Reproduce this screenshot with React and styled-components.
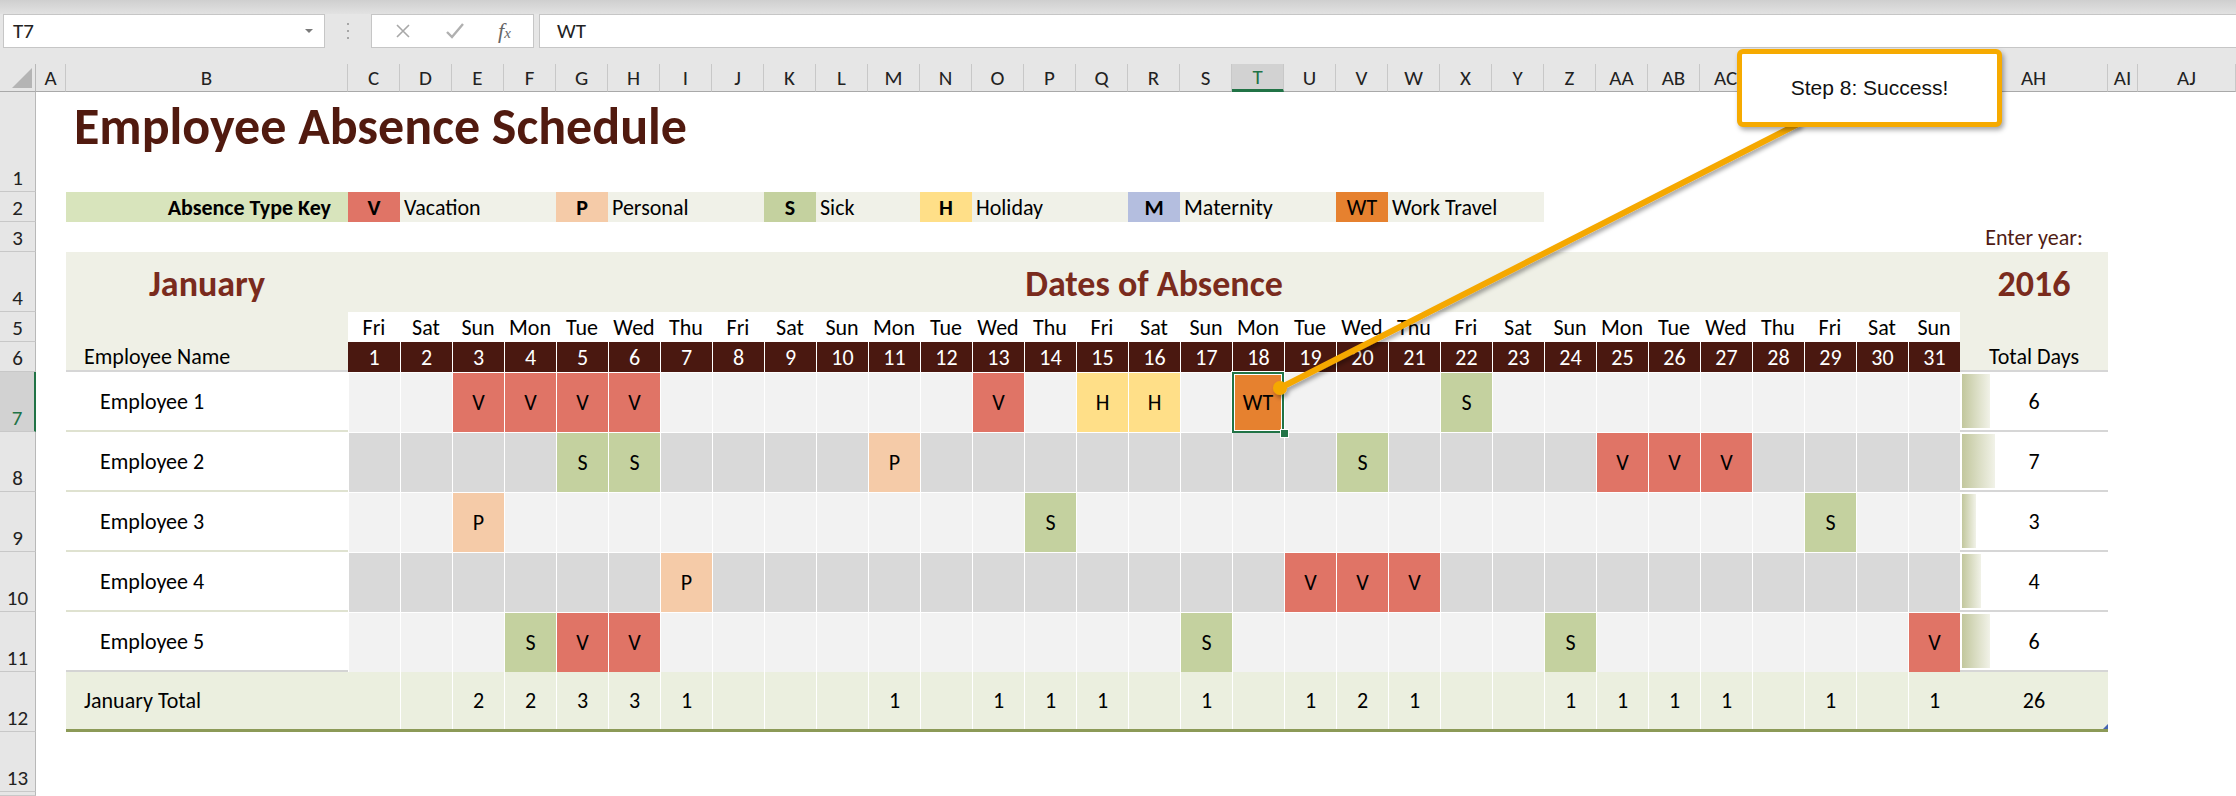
import React from 'react'
import styled, { createGlobalStyle, css } from 'styled-components'

const FONT = `Carlito, Calibri, Lato, sans-serif`

const GlobalStyle = createGlobalStyle`
  html, body {
    margin: 0;
    padding: 0;
    background: #fff;
  }
  body {
    font-family: ${FONT};
    overflow: hidden;
  }
`

const LETTERS = [
  'A', 'B', 'C', 'D', 'E', 'F', 'G', 'H', 'I', 'J', 'K', 'L', 'M', 'N', 'O', 'P', 'Q', 'R',
  'S', 'T', 'U', 'V', 'W', 'X', 'Y', 'Z', 'AA', 'AB', 'AC', 'AD', 'AE', 'AF', 'AG', 'AH', 'AI', 'AJ',
]
const WEEKDAYS = ['Fri', 'Sat', 'Sun', 'Mon', 'Tue', 'Wed', 'Thu']
const DAYS = Array.from({ length: 31 }, (_, i) => i + 1)

const CODES = {
  V: '#e07466',
  P: '#f5cba8',
  S: '#c4d19f',
  H: '#ffdf88',
  M: '#b4bedf',
  WT: '#e6812f',
}

const LEGEND = [
  { code: 'V', label: 'Vacation', col: 4, span: 3 },
  { code: 'P', label: 'Personal', col: 8, span: 3 },
  { code: 'S', label: 'Sick', col: 12, span: 2 },
  { code: 'H', label: 'Holiday', col: 15, span: 3 },
  { code: 'M', label: 'Maternity', col: 19, span: 3 },
  { code: 'WT', label: 'Work Travel', col: 23, span: 3 },
]

const employees = [
  { name: 'Employee 1', total: 6, days: { 3: 'V', 4: 'V', 5: 'V', 6: 'V', 13: 'V', 15: 'H', 16: 'H', 18: 'WT', 22: 'S' } },
  { name: 'Employee 2', total: 7, days: { 5: 'S', 6: 'S', 11: 'P', 20: 'S', 25: 'V', 26: 'V', 27: 'V' } },
  { name: 'Employee 3', total: 3, days: { 3: 'P', 14: 'S', 29: 'S' } },
  { name: 'Employee 4', total: 4, days: { 7: 'P', 19: 'V', 20: 'V', 21: 'V' } },
  { name: 'Employee 5', total: 6, days: { 4: 'S', 5: 'V', 6: 'V', 17: 'S', 24: 'S', 31: 'V' } },
]

const dayTotals = { 3: 2, 4: 2, 5: 3, 6: 3, 7: 1, 11: 1, 13: 1, 14: 1, 15: 1, 17: 1, 19: 1, 20: 2, 21: 1, 24: 1, 25: 1, 26: 1, 27: 1, 29: 1, 31: 1 }

export default function App() {
  return (
    <Page>
      <GlobalStyle />
      <TopStrip />
      <FormulaBar>
        <NameBox>
          <span>T7</span>
          <svg width="10" height="6" viewBox="0 0 10 6">
            <path d="M1 1 L9 1 L5 5 Z" fill="#7a7a7a" />
          </svg>
        </NameBox>
        <Grip>
          <svg width="4" height="20" viewBox="0 0 4 20">
            <rect x="1" y="2" width="2" height="2" fill="#a6a6a6" />
            <rect x="1" y="9" width="2" height="2" fill="#a6a6a6" />
            <rect x="1" y="16" width="2" height="2" fill="#a6a6a6" />
          </svg>
        </Grip>
        <FxBox>
          <svg width="18" height="18" viewBox="0 0 18 18">
            <path d="M3 3 L15 15 M15 3 L3 15" stroke="#a8a8a8" strokeWidth="1.6" fill="none" />
          </svg>
          <svg width="20" height="18" viewBox="0 0 20 18">
            <path d="M2 10 L7 15 L18 2" stroke="#b0b0b0" strokeWidth="2.4" fill="none" />
          </svg>
          <FxText>
            f<sub>x</sub>
          </FxText>
        </FxBox>
        <FormulaInput>WT</FormulaInput>
      </FormulaBar>

      <Sheet>
        <Corner $c={1} $r={1} />
        {LETTERS.map((l, i) => (
          <ColHeader key={l} $c={i + 2} $r={1} $active={l === 'T'}>
            {l}
          </ColHeader>
        ))}
        {Array.from({ length: 14 }, (_, i) => (
          <RowHeader key={i} $c={1} $r={i + 2} $active={i + 1 === 7}>
            {i < 13 ? i + 1 : ''}
          </RowHeader>
        ))}

        <Title $c={3} $r={2} $w={20}>
          Employee Absence Schedule
        </Title>

        <KeyLabel $c={3} $r={3}>
          Absence Type Key
        </KeyLabel>
        {LEGEND.map((item) => (
          <React.Fragment key={item.code}>
            <KeyCode $c={item.col} $r={3} $bg={CODES[item.code]} $plain={item.code === 'WT'}>
              {item.code}
            </KeyCode>
            <KeyText $c={item.col + 1} $r={3} $w={item.span}>
              {item.label}
            </KeyText>
          </React.Fragment>
        ))}

        <YearPrompt $c={35} $r={4}>
          Enter year:
        </YearPrompt>

        <HeaderBand $c={3} $r={5} $w={33} $h={3} />
        <BigHeading $c={3} $r={5}>
          January
        </BigHeading>
        <BigHeading $c={4} $r={5} $w={31}>
          Dates of Absence
        </BigHeading>
        <BigHeading $c={35} $r={5}>
          2016
        </BigHeading>

        {DAYS.map((d) => (
          <Weekday key={d} $c={3 + d} $r={6}>
            {WEEKDAYS[(d - 1) % 7]}
          </Weekday>
        ))}

        <NameHeader $c={3} $r={7}>
          Employee Name
        </NameHeader>
        {DAYS.map((d) => (
          <DateNum key={d} $c={3 + d} $r={7} $first={d === 1}>
            {d}
          </DateNum>
        ))}
        <TotalHeader $c={35} $r={7}>
          Total Days
        </TotalHeader>

        {employees.map((emp, i) => {
          const r = 8 + i
          return (
            <React.Fragment key={emp.name}>
              <NameCell $c={3} $r={r} $last={i === employees.length - 1}>
                {emp.name}
              </NameCell>
              {DAYS.map((d) => {
                const code = emp.days[d]
                const bg = code ? CODES[code] : i % 2 ? '#d9d9d9' : '#f2f2f2'
                return (
                  <DayCell key={d} $c={3 + d} $r={r} $bg={bg} $selected={i === 0 && d === 18}>
                    {code}
                  </DayCell>
                )
              })}
              <TotalCell $c={35} $r={r}>
                <DataBar style={{ width: Math.round(emp.total * 4.7) }} />
                <TotalValue>{emp.total}</TotalValue>
              </TotalCell>
            </React.Fragment>
          )
        })}

        <TotalBand $c={3} $r={13} $w={33} />
        <TotalLabel $c={3} $r={13}>
          January Total
        </TotalLabel>
        {DAYS.map((d) => (
          <TotalCount key={d} $c={3 + d} $r={13} $first={d === 1}>
            {dayTotals[d] || ''}
          </TotalCount>
        ))}
        <GrandTotal $c={35} $r={13}>
          26
        </GrandTotal>
      </Sheet>

      <Leader width="2236" height="796" viewBox="0 0 2236 796">
        <defs>
          <filter id="shadow" x="-10%" y="-10%" width="120%" height="120%">
            <feDropShadow dx="2" dy="3" stdDeviation="2" floodColor="#000" floodOpacity="0.35" />
          </filter>
        </defs>
        <g filter="url(#shadow)">
          <line x1="1798" y1="124" x2="1280" y2="388" stroke="#f5a800" strokeWidth="6" strokeLinecap="round" />
          <circle cx="1280" cy="388" r="7" fill="#f5a800" />
        </g>
      </Leader>
      <Callout>Step 8: Success!</Callout>
    </Page>
  )
}

const at = css`
  grid-column: ${(p) => p.$c} / span ${(p) => p.$w || 1};
  grid-row: ${(p) => p.$r} / span ${(p) => p.$h || 1};
`

const Page = styled.div`
  position: relative;
  width: 2236px;
  height: 796px;
  overflow: hidden;
  background: #fff;
  font-family: ${FONT};
`

const TopStrip = styled.div`
  height: 14px;
  background: linear-gradient(#cfcfcf, #e2e2e2);
`

const FormulaBar = styled.div`
  display: flex;
  height: 50px;
  padding: 0 0 16px 3px;
  box-sizing: border-box;
  background: #e6e6e6;
`

const Box = styled.div`
  display: flex;
  align-items: center;
  box-sizing: border-box;
  background: #fff;
  border: 1px solid #c6c6c6;
`

const NameBox = styled(Box)`
  width: 322px;
  justify-content: space-between;
  padding: 0 10px 0 9px;
  font-size: 21px;
  color: #222;
`

const Grip = styled.div`
  width: 46px;
  display: flex;
  align-items: center;
  justify-content: center;
`

const FxBox = styled(Box)`
  width: 163px;
  gap: 33px;
  padding-left: 22px;
`

const FxText = styled.span`
  font-family: 'Liberation Serif', serif;
  font-style: italic;
  font-size: 22px;
  color: #666;
  sub {
    font-size: 15px;
    vertical-align: 0;
  }
`

const FormulaInput = styled(Box)`
  flex: 1;
  margin-left: 5px;
  padding-left: 17px;
  font-size: 21px;
  color: #222;
  border-right: none;
`

const Sheet = styled.div`
  display: grid;
  grid-template-columns: 36px 30px 282px repeat(31, 52px) 148px 30px 1fr;
  grid-template-rows: 28px 100px 30px 30px 60px 30px 30px repeat(5, 60px) 60px 60px 1fr;
  height: 732px;
  font-size: 22px;
  color: #000;
`

const Corner = styled.div`
  ${at};
  position: relative;
  background: #e6e6e6;
  border-right: 1px solid #b8b8b8;
  border-bottom: 1px solid #a9a9a9;

  &::after {
    content: '';
    position: absolute;
    right: 3px;
    bottom: 3px;
    width: 20px;
    height: 20px;
    background: #b4b4b4;
    clip-path: polygon(100% 0, 100% 100%, 0 100%);
  }
`

const ColHeader = styled.div`
  ${at};
  display: flex;
  align-items: center;
  justify-content: center;
  box-sizing: border-box;
  font-size: 21px;
  background: ${(p) => (p.$active ? '#d2d2d2' : '#e6e6e6')};
  color: ${(p) => (p.$active ? '#217346' : '#222')};
  border-right: 1px solid #c8c8c8;
  border-bottom: ${(p) => (p.$active ? '3px solid #217346' : '1px solid #a9a9a9')};
`

const RowHeader = styled.div`
  ${at};
  display: flex;
  align-items: flex-end;
  justify-content: center;
  box-sizing: border-box;
  font-size: 21px;
  line-height: 1.2;
  background: ${(p) => (p.$active ? '#d2d2d2' : '#e6e6e6')};
  color: ${(p) => (p.$active ? '#217346' : '#222')};
  border-bottom: 1px solid #c8c8c8;
  border-right: ${(p) => (p.$active ? '2px solid #217346' : '1px solid #b8b8b8')};
`

const Title = styled.div`
  ${at};
  align-self: end;
  padding: 0 0 40px 8px;
  font-size: 52px;
  line-height: 1;
  font-weight: 700;
  color: #511a0f;
  white-space: nowrap;
`

const Centered = styled.div`
  ${at};
  position: relative;
  display: flex;
  align-items: center;
  justify-content: center;
  box-sizing: border-box;
  white-space: nowrap;
`

const KeyLabel = styled(Centered)`
  justify-content: flex-end;
  padding-right: 17px;
  background: #d8e4bc;
  font-weight: 700;
`

const KeyCode = styled(Centered)`
  background: ${(p) => p.$bg};
  font-weight: ${(p) => (p.$plain ? 400 : 700)};
`

const KeyText = styled(Centered)`
  justify-content: flex-start;
  padding-left: 4px;
  background: #f0f1e8;
`

const YearPrompt = styled(Centered)`
  color: #4f1c14;
`

const HeaderBand = styled.div`
  ${at};
  background: #eff0e6;
`

const BigHeading = styled(Centered)`
  padding-top: 4px;
  font-size: 36px;
  font-weight: 700;
  color: #7a2b1d;
`

const Weekday = styled(Centered)`
  background: #fff;
`

const DateNum = styled(Centered)`
  background: #4a1810;
  color: #fff;
  border-left: ${(p) => (p.$first ? 'none' : '1px solid #fff')};
`

const NameHeader = styled(Centered)`
  justify-content: flex-start;
  padding-left: 18px;
  border-bottom: 2px solid #d6d6d6;
`

const TotalHeader = styled(Centered)`
  border-bottom: 2px solid #d6d6d6;
`

const NameCell = styled(Centered)`
  justify-content: flex-start;
  padding-left: 34px;
  background: #fff;
  border-bottom: 2px solid ${(p) => (p.$last ? '#d4d4d4' : '#dfe2d0')};
`

const DayCell = styled(Centered)`
  background: ${(p) => p.$bg};
  border-left: 1px solid #fff;
  border-top: 1px solid #fff;

  ${(p) =>
    p.$selected &&
    css`
      z-index: 2;
      box-shadow: inset 0 0 0 2px #217346, inset 0 0 0 3px #fff;
      margin: -1px 0 -1px -1px;

      &::after {
        content: '';
        position: absolute;
        right: -5px;
        bottom: -5px;
        width: 7px;
        height: 7px;
        background: #217346;
        border: 1px solid #fff;
      }
    `}
`

const TotalCell = styled(Centered)`
  background: #fff;
  border-bottom: 2px solid #d6d6d6;
`

const DataBar = styled.div`
  position: absolute;
  left: 2px;
  top: 2px;
  bottom: 2px;
  background: linear-gradient(90deg, #c2c79d, #f1f2e8);
`

const TotalValue = styled.span`
  position: relative;
`

const TotalBand = styled.div`
  ${at};
  position: relative;
  background: #ebefdf;
  border-bottom: 3px solid #8c9a57;

  &::after {
    content: '';
    position: absolute;
    right: 0;
    bottom: 0;
    width: 5px;
    height: 5px;
    background: #4565b3;
    clip-path: polygon(100% 0, 100% 100%, 0 100%);
  }
`

const TotalLabel = styled(Centered)`
  justify-content: flex-start;
  padding: 0 0 3px 18px;
`

const TotalCount = styled(Centered)`
  margin-bottom: 3px;
  border-left: ${(p) => (p.$first ? 'none' : '1px solid #fff')};
`

const GrandTotal = styled(Centered)`
  padding-bottom: 3px;
`

const Leader = styled.svg`
  position: absolute;
  left: 0;
  top: 0;
  pointer-events: none;
  z-index: 5;
`

const Callout = styled.div`
  position: absolute;
  left: 1737px;
  top: 49px;
  width: 265px;
  height: 78px;
  box-sizing: border-box;
  display: flex;
  align-items: center;
  justify-content: center;
  background: #fff;
  border: 5px solid #f6aa00;
  border-radius: 6px;
  box-shadow: 2px 3px 5px rgba(0, 0, 0, 0.35);
  font-family: 'Liberation Sans', Arial, sans-serif;
  font-size: 21px;
  color: #111;
  z-index: 6;
`
